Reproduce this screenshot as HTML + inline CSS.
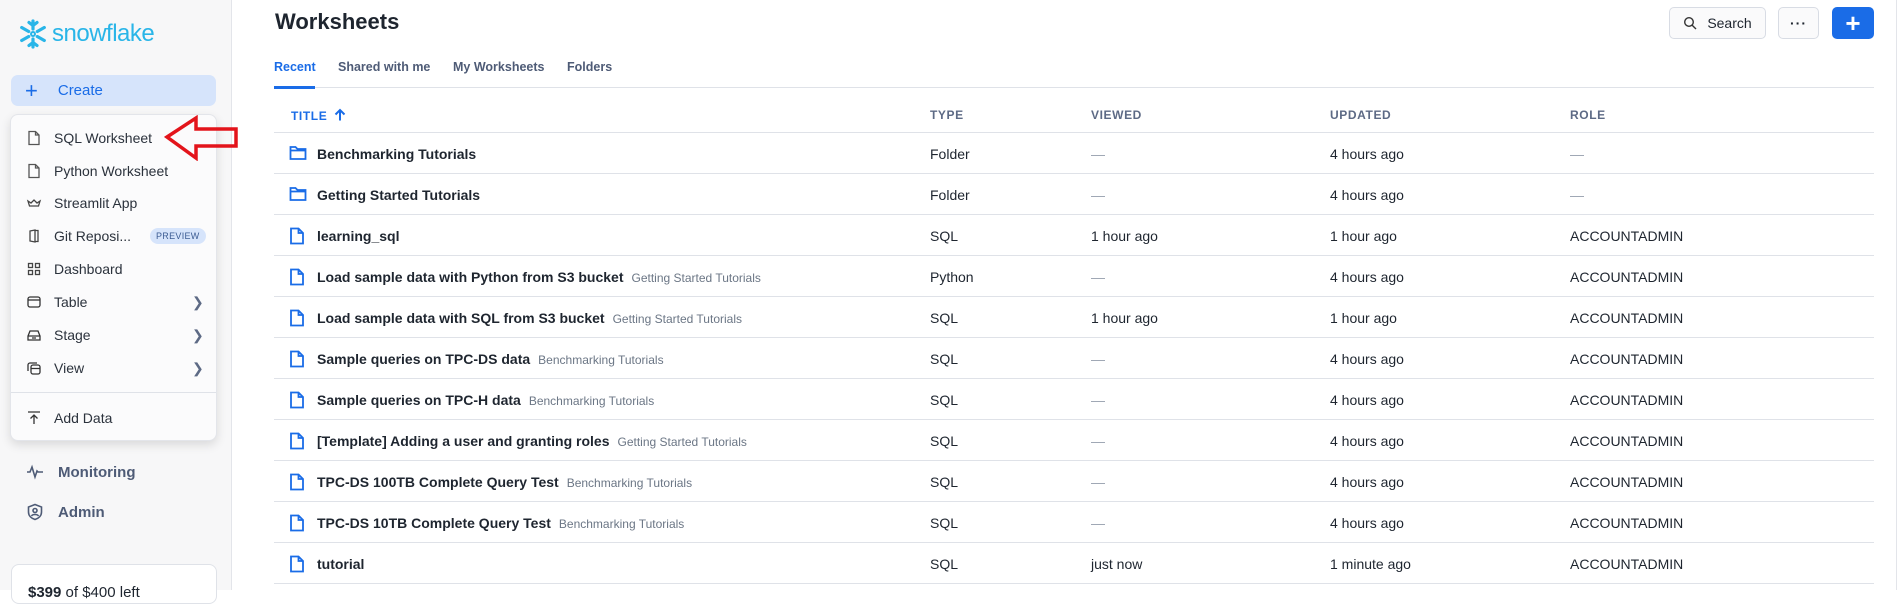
<!DOCTYPE html>
<html><head><meta charset="utf-8"><style>
*{box-sizing:border-box;margin:0;padding:0}
body{width:1899px;height:590px;overflow:hidden;background:#fff;font-family:"Liberation Sans",sans-serif;color:#1e252f;position:relative}
.side{position:absolute;left:0;top:0;width:232px;height:590px;background:#f7f7f8;border-right:1px solid #e3e5ea}
.logo{position:absolute;left:17px;top:18px;display:flex;align-items:center}
.logo span{color:#29b5e8;font-size:24px;margin-left:3px;letter-spacing:-0.5px}
.create{position:absolute;left:11px;top:75px;width:205px;height:31px;background:#d6e4fb;border-radius:7px;color:#1a6ce7;font-size:15px;display:flex;align-items:center;padding-left:14px}
.create b{font-weight:normal;font-size:22px;margin-right:20px;line-height:1}
.menu{position:absolute;left:10px;top:114px;width:207px;height:327px;background:#fbfbfc;border:1px solid #e3e5ea;border-radius:8px;box-shadow:0 4px 10px rgba(0,0,0,.12)}
.mi{position:absolute;left:0;width:100%;height:30px;display:flex;align-items:center;font-size:14px;color:#2b323c}
.mi svg{position:absolute;left:15px}
.mi .t{position:absolute;left:43px}
.mi .ch{position:absolute;left:181px;color:#5d6a85;font-size:14px}
.pv{position:absolute;left:139px;background:#d6e4fb;color:#3c5c93;font-size:9px;padding:3px 6px;border-radius:8px;letter-spacing:.3px}
.sep{position:absolute;left:0;top:277px;width:100%;border-top:1px solid #dfe2e8}
.nav{position:absolute;left:26px;font-size:15px;font-weight:bold;color:#4e5b76;display:flex;align-items:center}
.nav .t{margin-left:14px}
.card{position:absolute;left:11px;top:564px;width:206px;height:40px;background:#fff;border:1px solid #dfe2e8;border-radius:8px;padding:19px 0 0 16px;font-size:15px}
h1{position:absolute;left:275px;top:9px;font-size:22px;font-weight:bold;color:#1e252f}
.tabs{position:absolute;left:274px;top:60px;font-size:12.5px;font-weight:bold;color:#4e5b76}
.tabs span{position:absolute;white-space:nowrap}
.tabline{position:absolute;left:274px;top:87px;width:1600px;border-top:1px solid #dfe2e8}
.tabul{position:absolute;left:274px;top:86px;width:41px;height:3px;background:#1a6ce7}
.btn{position:absolute;top:7px;height:32px;border:1px solid #d8dce4;border-radius:5px;background:#fafafb;display:flex;align-items:center;justify-content:center;font-size:14px}
.hd{position:absolute;top:108px;font-size:12px;font-weight:bold;color:#5d6a85;letter-spacing:.6px}
.line{position:absolute;left:274px;width:1600px;border-top:1px solid #dfe2e8}
.row{position:absolute;left:0;width:1899px;height:41px;font-size:14px}
.row>*{position:absolute;top:13px;white-space:nowrap}
.row svg{left:289px;top:12px}
.nm{left:317px;font-weight:bold;color:#1e252f}
.nm i{font-style:normal;font-weight:normal;color:#6b7685;font-size:12px;margin-left:8px}
.c1{left:930px}.c2{left:1091px}.c3{left:1330px}.c4{left:1570px}
.dash{color:#9aa3b0}
</style></head><body>
<div class="side">
 <div class="logo">
  <svg width="32" height="32" viewBox="0 0 32 32" fill="none" stroke="#29b5e8" stroke-width="3.2" stroke-linecap="round"><path d="M16 3v8M16 21v8M4.7 9.5l7 4M20.3 18.5l7 4M4.7 22.5l7-4M20.3 13.5l7-4M12 4.5l4 3 4-3M12 27.5l4-3 4 3"/><circle cx="16" cy="16" r="2" stroke-width="2"/></svg>
  <span>snowflake</span>
 </div>
 <div class="create"><b>+</b>Create</div>
 <div class="menu">
  <div class="mi" style="top:8px"><svg width="16" height="16" viewBox="0 0 16 16" fill="none" stroke="#555" stroke-width="1.3"><path d="M3 1.5h6.5l3.5 3.5v9.5H3z M9.5 1.5v3.5H13"/></svg><span class="t">SQL Worksheet</span></div>
  <div class="mi" style="top:41px"><svg width="16" height="16" viewBox="0 0 16 16" fill="none" stroke="#555" stroke-width="1.3"><path d="M3 1.5h6.5l3.5 3.5v9.5H3z M9.5 1.5v3.5H13"/></svg><span class="t">Python Worksheet</span></div>
  <div class="mi" style="top:73px"><svg width="16" height="16" viewBox="0 0 16 16" fill="none" stroke="#444" stroke-width="1.3"><path d="M2 6l3 2 3-3 3 3 3-2-1.5 5h-9z"/></svg><span class="t">Streamlit App</span></div>
  <div class="mi" style="top:106px"><svg width="16" height="16" viewBox="0 0 16 16" fill="none" stroke="#444" stroke-width="1.3"><path d="M4 3l5-1v12l-5-1z M9 2.5h3v11H9"/></svg><span class="t">Git Reposi...</span><span class="pv">PREVIEW</span></div>
  <div class="mi" style="top:139px"><svg width="16" height="16" viewBox="0 0 16 16" fill="none" stroke="#444" stroke-width="1.3"><rect x="2.5" y="2.5" width="4" height="4"/><rect x="9.5" y="2.5" width="4" height="4"/><rect x="2.5" y="9.5" width="4" height="4"/><rect x="9.5" y="9.5" width="4" height="4"/></svg><span class="t">Dashboard</span></div>
  <div class="mi" style="top:172px"><svg width="16" height="16" viewBox="0 0 16 16" fill="none" stroke="#333" stroke-width="1.3"><rect x="2" y="3" width="12" height="10" rx="2"/><path d="M2 6h12"/></svg><span class="t">Table</span><span class="ch">&#x276F;</span></div>
  <div class="mi" style="top:205px"><svg width="16" height="16" viewBox="0 0 16 16" fill="none" stroke="#333" stroke-width="1.3"><path d="M4 4h8l2 5v4H2V9z M2 9h12 M6 11h4"/></svg><span class="t">Stage</span><span class="ch">&#x276F;</span></div>
  <div class="mi" style="top:238px"><svg width="16" height="16" viewBox="0 0 16 16" fill="none" stroke="#333" stroke-width="1.3"><rect x="5" y="5" width="9" height="9" rx="2"/><path d="M5 8.5h9 M11 3H4a2 2 0 0 0-2 2v6"/></svg><span class="t">View</span><span class="ch">&#x276F;</span></div>
  <div class="sep"></div>
  <div class="mi" style="top:288px"><svg width="16" height="16" viewBox="0 0 16 16" fill="none" stroke="#333" stroke-width="1.3"><path d="M2 2h12 M8 14V5 M4.5 8.5 8 5l3.5 3.5"/></svg><span class="t">Add Data</span></div>
 </div>
 <div class="nav" style="top:463px"><svg width="18" height="18" viewBox="0 0 18 18" fill="none" stroke="#4e5b76" stroke-width="1.6"><path d="M1 9h3l2-5 3 10 2-6 1 1h5"/></svg><span class="t">Monitoring</span></div>
 <div class="nav" style="top:503px"><svg width="18" height="18" viewBox="0 0 18 18" fill="none" stroke="#4e5b76" stroke-width="1.6"><path d="M9 1.5l6.5 2.5v5c0 4-3 6.5-6.5 7.5C5.5 15.5 2.5 13 2.5 9V4z"/><circle cx="9" cy="7.5" r="2"/><path d="M5.5 13c1-2 6-2 7 0"/></svg><span class="t">Admin</span></div>
 <div class="card"><b>$399</b> of $400 left</div>
</div>
<svg style="position:absolute;left:164px;top:115px" width="76" height="46" viewBox="0 0 76 46"><path d="M3 22L32 3v11h40v17H32v12z" fill="none" stroke="#e3141b" stroke-width="3.5" stroke-linejoin="miter"/></svg>

<h1>Worksheets</h1>
<div class="btn" style="left:1669px;width:97px"><svg width="14" height="14" viewBox="0 0 14 14" fill="none" stroke="#333" stroke-width="1.4" style="margin-right:10px"><circle cx="6" cy="6" r="4.3"/><path d="M9.2 9.2L13 13"/></svg>Search</div>
<div class="btn" style="left:1778px;width:41px;font-weight:bold;letter-spacing:1px">···</div>
<div class="btn" style="left:1832px;width:42px;background:#1a6ce7;border-color:#1a6ce7;color:#fff;font-size:26px;font-weight:bold">+</div>

<div class="tabs"><span style="left:0;color:#1a6ce7">Recent</span><span style="left:64px">Shared with me</span><span style="left:179px">My Worksheets</span><span style="left:293px">Folders</span></div>
<div class="tabline"></div><div class="tabul"></div>

<div class="hd" style="left:291px;color:#1a6ce7">TITLE <svg width="12" height="13" viewBox="0 0 12 13" fill="none" stroke="#1a6ce7" stroke-width="2" style="vertical-align:-1px;margin-left:3px"><path d="M6 12.5V2 M1.5 6.5 6 2l4.5 4.5"/></svg></div>
<div class="hd c1">TYPE</div><div class="hd c2">VIEWED</div><div class="hd c3">UPDATED</div><div class="hd c4">ROLE</div>
<div class="line" style="top:132px"></div>

<div class="row" style="top:133px"><svg width="18" height="16" viewBox="0 0 18 16" fill="none" stroke="#1a6ce7" stroke-width="1.8"><path d="M1.5 2h5l2 2h8v10h-15z M1.5 5.5h15"/></svg><span class="nm">Benchmarking Tutorials</span><span class="c1">Folder</span><span class="c2 dash">—</span><span class="c3">4 hours ago</span><span class="c4 dash">—</span></div>
<div class="line" style="top:173px"></div>
<div class="row" style="top:174px"><svg width="18" height="16" viewBox="0 0 18 16" fill="none" stroke="#1a6ce7" stroke-width="1.8"><path d="M1.5 2h5l2 2h8v10h-15z M1.5 5.5h15"/></svg><span class="nm">Getting Started Tutorials</span><span class="c1">Folder</span><span class="c2 dash">—</span><span class="c3">4 hours ago</span><span class="c4 dash">—</span></div>
<div class="line" style="top:214px"></div>
<div class="row" style="top:215px"><svg width="16" height="18" viewBox="0 0 16 18" fill="none" stroke="#1a6ce7" stroke-width="1.8"><path d="M2 1.5h7.5l4.5 4.5v10.5H2z M9.5 1.5V6H14"/></svg><span class="nm">learning_sql</span><span class="c1">SQL</span><span class="c2">1 hour ago</span><span class="c3">1 hour ago</span><span class="c4">ACCOUNTADMIN</span></div>
<div class="line" style="top:255px"></div>
<div class="row" style="top:256px"><svg width="16" height="18" viewBox="0 0 16 18" fill="none" stroke="#1a6ce7" stroke-width="1.8"><path d="M2 1.5h7.5l4.5 4.5v10.5H2z M9.5 1.5V6H14"/></svg><span class="nm">Load sample data with Python from S3 bucket<i>Getting Started Tutorials</i></span><span class="c1">Python</span><span class="c2 dash">—</span><span class="c3">4 hours ago</span><span class="c4">ACCOUNTADMIN</span></div>
<div class="line" style="top:296px"></div>
<div class="row" style="top:297px"><svg width="16" height="18" viewBox="0 0 16 18" fill="none" stroke="#1a6ce7" stroke-width="1.8"><path d="M2 1.5h7.5l4.5 4.5v10.5H2z M9.5 1.5V6H14"/></svg><span class="nm">Load sample data with SQL from S3 bucket<i>Getting Started Tutorials</i></span><span class="c1">SQL</span><span class="c2">1 hour ago</span><span class="c3">1 hour ago</span><span class="c4">ACCOUNTADMIN</span></div>
<div class="line" style="top:337px"></div>
<div class="row" style="top:338px"><svg width="16" height="18" viewBox="0 0 16 18" fill="none" stroke="#1a6ce7" stroke-width="1.8"><path d="M2 1.5h7.5l4.5 4.5v10.5H2z M9.5 1.5V6H14"/></svg><span class="nm">Sample queries on TPC-DS data<i>Benchmarking Tutorials</i></span><span class="c1">SQL</span><span class="c2 dash">—</span><span class="c3">4 hours ago</span><span class="c4">ACCOUNTADMIN</span></div>
<div class="line" style="top:378px"></div>
<div class="row" style="top:379px"><svg width="16" height="18" viewBox="0 0 16 18" fill="none" stroke="#1a6ce7" stroke-width="1.8"><path d="M2 1.5h7.5l4.5 4.5v10.5H2z M9.5 1.5V6H14"/></svg><span class="nm">Sample queries on TPC-H data<i>Benchmarking Tutorials</i></span><span class="c1">SQL</span><span class="c2 dash">—</span><span class="c3">4 hours ago</span><span class="c4">ACCOUNTADMIN</span></div>
<div class="line" style="top:419px"></div>
<div class="row" style="top:420px"><svg width="16" height="18" viewBox="0 0 16 18" fill="none" stroke="#1a6ce7" stroke-width="1.8"><path d="M2 1.5h7.5l4.5 4.5v10.5H2z M9.5 1.5V6H14"/></svg><span class="nm">[Template] Adding a user and granting roles<i>Getting Started Tutorials</i></span><span class="c1">SQL</span><span class="c2 dash">—</span><span class="c3">4 hours ago</span><span class="c4">ACCOUNTADMIN</span></div>
<div class="line" style="top:460px"></div>
<div class="row" style="top:461px"><svg width="16" height="18" viewBox="0 0 16 18" fill="none" stroke="#1a6ce7" stroke-width="1.8"><path d="M2 1.5h7.5l4.5 4.5v10.5H2z M9.5 1.5V6H14"/></svg><span class="nm">TPC-DS 100TB Complete Query Test<i>Benchmarking Tutorials</i></span><span class="c1">SQL</span><span class="c2 dash">—</span><span class="c3">4 hours ago</span><span class="c4">ACCOUNTADMIN</span></div>
<div class="line" style="top:501px"></div>
<div class="row" style="top:502px"><svg width="16" height="18" viewBox="0 0 16 18" fill="none" stroke="#1a6ce7" stroke-width="1.8"><path d="M2 1.5h7.5l4.5 4.5v10.5H2z M9.5 1.5V6H14"/></svg><span class="nm">TPC-DS 10TB Complete Query Test<i>Benchmarking Tutorials</i></span><span class="c1">SQL</span><span class="c2 dash">—</span><span class="c3">4 hours ago</span><span class="c4">ACCOUNTADMIN</span></div>
<div class="line" style="top:542px"></div>
<div class="row" style="top:543px"><svg width="16" height="18" viewBox="0 0 16 18" fill="none" stroke="#1a6ce7" stroke-width="1.8"><path d="M2 1.5h7.5l4.5 4.5v10.5H2z M9.5 1.5V6H14"/></svg><span class="nm">tutorial</span><span class="c1">SQL</span><span class="c2">just now</span><span class="c3">1 minute ago</span><span class="c4">ACCOUNTADMIN</span></div>
<div class="line" style="top:583px"></div>
<div style="position:absolute;left:1896px;top:0;width:1px;height:590px;background:#e3e5ea"></div>
</body></html>
